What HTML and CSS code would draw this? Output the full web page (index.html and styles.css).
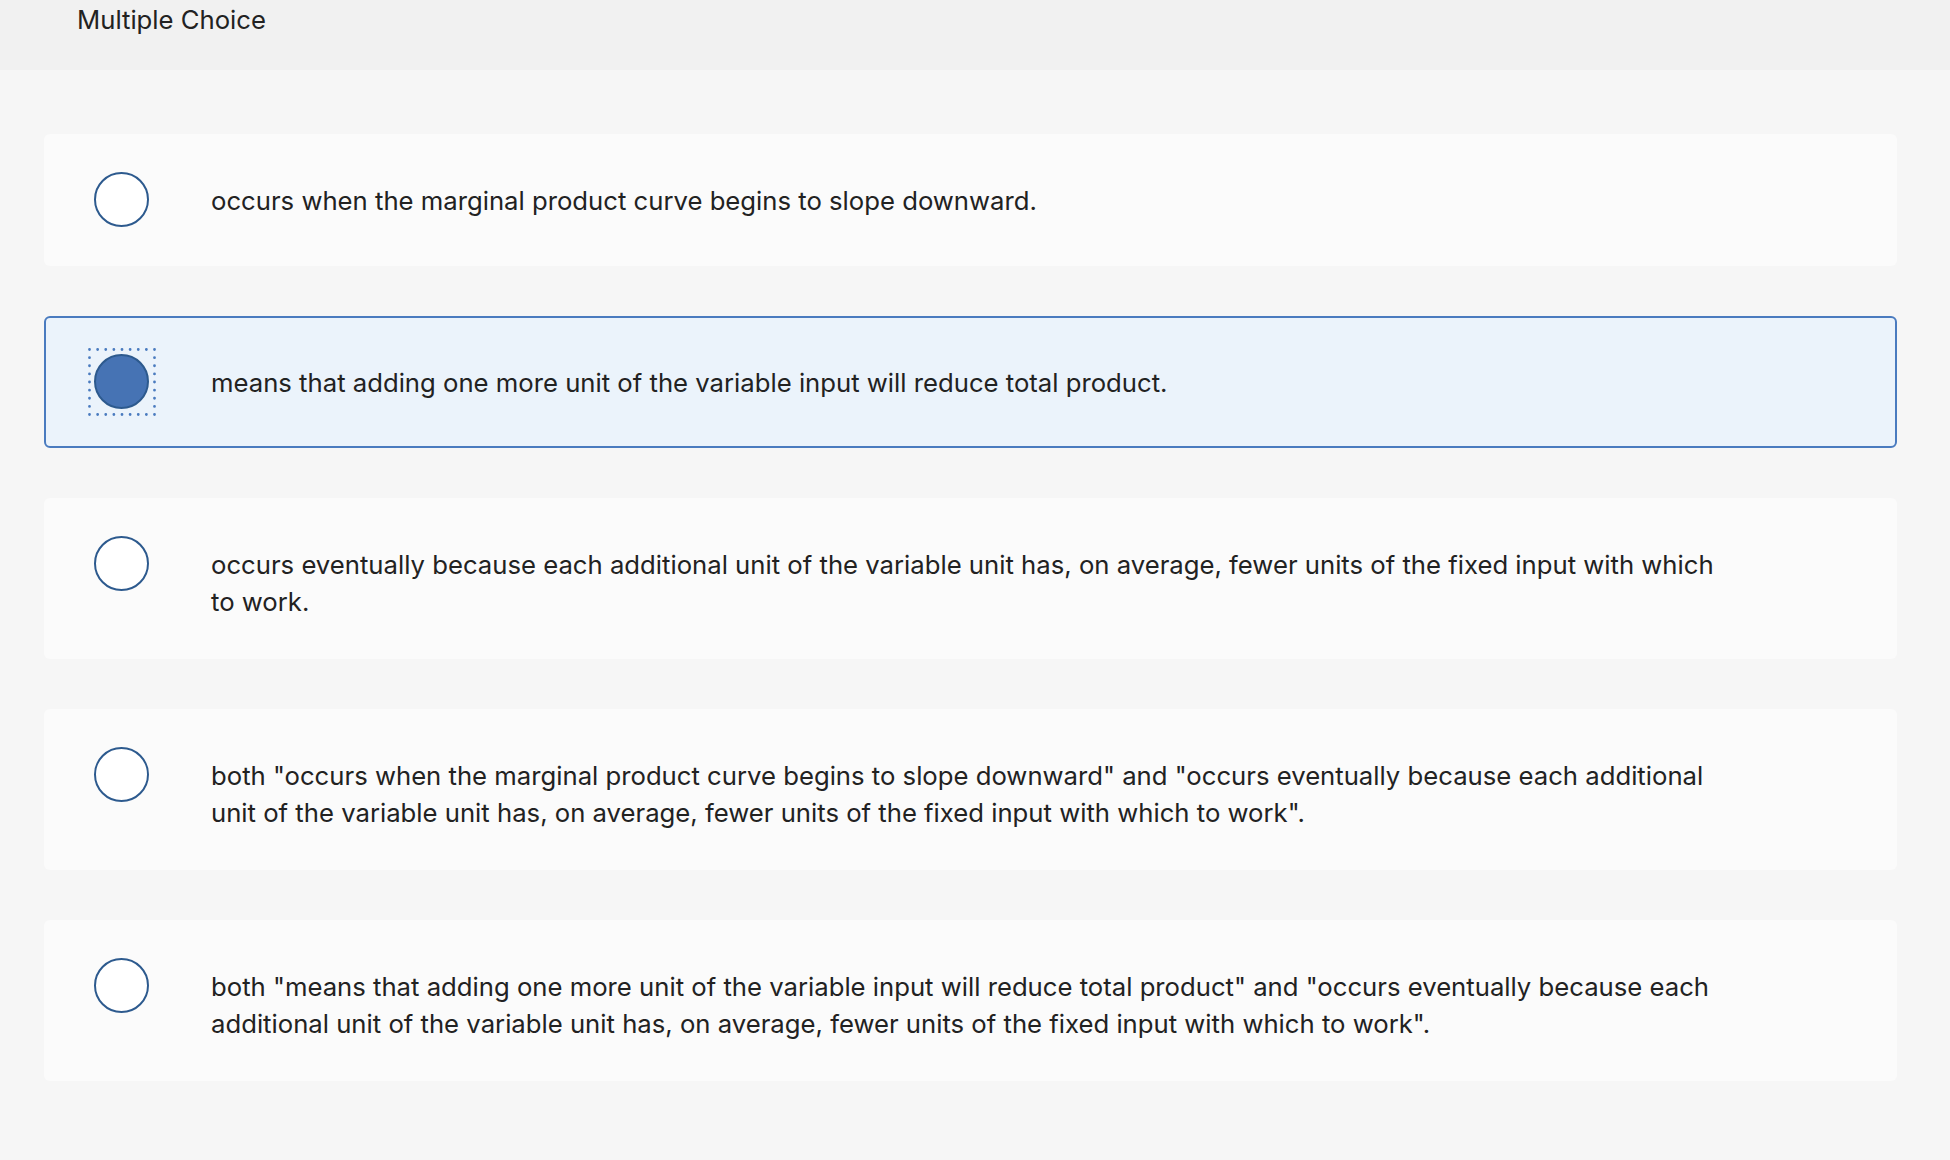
FILE: index.html
```html
<!DOCTYPE html>
<html lang="en">
<head>
<meta charset="utf-8">
<title>Multiple Choice</title>
<link rel="stylesheet" href="styles.css">
</head>
<body>
<header class="top-bar">
  <h1 class="top-title">Multiple Choice</h1>
</header>
<main class="choices" role="radiogroup">
  <div class="choice">
    <span class="radio"></span>
    <p class="choice-text">occurs when the marginal product curve begins to slope downward.</p>
  </div>
  <div class="choice is-selected">
    <span class="radio-wrap">
      <span class="radio"></span>
      <svg class="focus-ring" width="68" height="68" viewBox="0 0 68 68" aria-hidden="true">
        <rect x="1.5" y="1.5" width="65" height="65" fill="none" stroke="#4a7bbf" stroke-width="2.8" stroke-linecap="round" stroke-dasharray="0 8.125"/>
      </svg>
    </span>
    <p class="choice-text">means that adding one more unit of the variable input will reduce total product.</p>
  </div>
  <div class="choice">
    <span class="radio"></span>
    <p class="choice-text">occurs eventually because each additional unit of the variable unit has, on average, fewer units of the fixed input with which to work.</p>
  </div>
  <div class="choice">
    <span class="radio"></span>
    <p class="choice-text">both "occurs when the marginal product curve begins to slope downward" and "occurs eventually because each additional unit of the variable unit has, on average, fewer units of the fixed input with which to work".</p>
  </div>
  <div class="choice">
    <span class="radio"></span>
    <p class="choice-text">both "means that adding one more unit of the variable input will reduce total product" and "occurs eventually because each additional unit of the variable unit has, on average, fewer units of the fixed input with which to work".</p>
  </div>
</main>
</body>
</html>
```
FILE: styles.css
```css
* { box-sizing: border-box; }
body {
  margin: 0;
  background: #f6f6f6;
  color: #222222;
  font-family: Inter, "Liberation Sans", sans-serif;
}
.top-bar {
  height: 70px;
  background: #f1f1f1;
  padding: 0 0 0 77px;
}
.top-title {
  margin: 0;
  font-size: 25.7px;
  font-weight: 400;
  line-height: 40px;
}
.choices {
  display: flex;
  flex-direction: column;
  gap: 50px;
  padding: 64px 53px 40px 44px;
}
.choice {
  display: flex;
  align-items: flex-start;
  background: #fbfbfb;
  border: 2px solid transparent;
  border-radius: 6px;
  padding: 36px 0 37px 48px;
}
.choice.is-selected {
  background: #ebf3fb;
  border-color: #4a7bbf;
}
.radio {
  display: block;
  flex: none;
  width: 55px;
  height: 55px;
  border-radius: 50%;
  border: 2px solid #2d5a8e;
  background: #ffffff;
}
.radio-wrap {
  position: relative;
  display: block;
  flex: none;
}
.focus-ring {
  position: absolute;
  left: -6.5px;
  top: -6.5px;
  display: block;
}
.is-selected .radio { background: #4673b4; }
.choice-text {
  margin: 0 0 0 62px;
  padding-top: 10px;
  max-width: 1525px;
  font-size: 25.7px;
  line-height: 37px;
}
```
